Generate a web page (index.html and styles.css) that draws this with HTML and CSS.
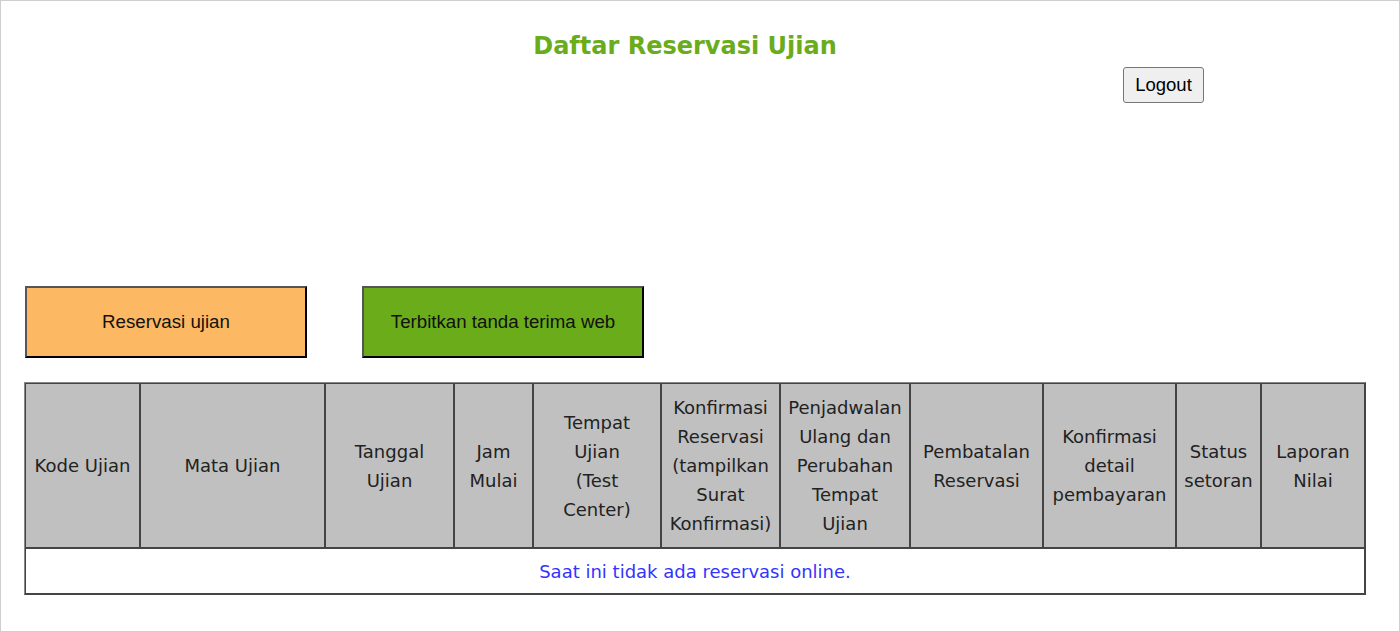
FILE: index.html
```html
<!DOCTYPE html>
<html lang="id">
<head>
<meta charset="utf-8">
<title>Daftar Reservasi Ujian</title>
<link rel="stylesheet" href="styles.css">
</head>
<body>
<div class="page">
  <h1 class="title">Daftar Reservasi Ujian</h1>
  <div class="logout-row">
    <button class="logout" type="button">Logout</button>
  </div>
  <div class="actions">
    <button class="action action-orange" type="button">Reservasi ujian</button>
    <button class="action action-green" type="button">Terbitkan tanda terima web</button>
  </div>
  <table class="list">
    <colgroup>
      <col class="c1"><col class="c2"><col class="c3"><col class="c4"><col class="c5"><col class="c6">
      <col class="c7"><col class="c8"><col class="c9"><col class="c10"><col class="c11">
    </colgroup>
    <thead>
      <tr>
        <th>Kode Ujian</th>
        <th>Mata Ujian</th>
        <th>Tanggal<br>Ujian</th>
        <th>Jam<br>Mulai</th>
        <th>Tempat<br>Ujian<br>(Test<br>Center)</th>
        <th>Konfirmasi<br>Reservasi<br>(tampilkan<br>Surat<br>Konfirmasi)</th>
        <th>Penjadwalan<br>Ulang dan<br>Perubahan<br>Tempat<br>Ujian</th>
        <th>Pembatalan<br>Reservasi</th>
        <th>Konfirmasi<br>detail<br>pembayaran</th>
        <th>Status<br>setoran</th>
        <th>Laporan<br>Nilai</th>
      </tr>
    </thead>
    <tbody>
      <tr>
        <td class="empty" colspan="11">Saat ini tidak ada reservasi online.</td>
      </tr>
    </tbody>
  </table>
</div>
</body>
</html>
```
FILE: styles.css
```css
html, body {
  margin: 0;
  padding: 0;
  background: #ffffff;
}

.page {
  box-sizing: border-box;
  width: 1400px;
  height: 632px;
  border: 1px solid #cfcfcf;
  padding: 0 0 0 24px;
  font-family: "DejaVu Sans", Verdana, sans-serif;
}

.title {
  margin: 29px 0 0 -24px;
  padding-right: 30px;
  text-align: center;
  font-family: "DejaVu Sans", Verdana, sans-serif;
  font-size: 24px;
  font-weight: bold;
  line-height: 32px;
  color: #6aac1a;
}

.logout-row {
  display: flex;
  justify-content: flex-end;
  padding-right: 195px;
  margin-top: 5px;
}

.logout {
  box-sizing: border-box;
  width: 81px;
  height: 36px;
  padding: 0;
  font-family: "Liberation Sans", Arial, sans-serif;
  font-size: 18.5px;
  color: #000;
  background: #efefef;
  border: 1px solid #767676;
  border-radius: 3px;
}

.actions {
  display: flex;
  gap: 55px;
  margin-top: 183px;
}

.action {
  box-sizing: border-box;
  width: 282px;
  height: 72px;
  padding: 0;
  font-family: "Liberation Sans", Arial, sans-serif;
  font-size: 18.7px;
  color: #111;
  border-width: 2px;
  border-style: solid;
  border-color: #555 #000 #000 #555;
}

.action-orange { background: #fcb862; }
.action-green { background: #6aac1a; }

.list {
  margin: 24px 0 0 -1px;
  width: 1341px;
  border-collapse: separate;
  border-spacing: 0;
  border-width: 1px;
  border-style: solid;
  border-color: #888 #444 #444 #888;
  table-layout: fixed;
  font-size: 18px;
  line-height: 29px;
  color: #222;
}

.list th,
.list td {
  border: 1px solid #444;
  padding: 0;
  text-align: center;
}

.list th {
  height: 163px;
  background: #c0c0c0;
  font-weight: normal;
  vertical-align: middle;
}

.c1 { width: 115px; }
.c2 { width: 185px; }
.c3 { width: 129px; }
.c4 { width: 79px; }
.c5 { width: 128px; }
.c6 { width: 119px; }
.c7 { width: 130px; }
.c8 { width: 133px; }
.c9 { width: 133px; }
.c10 { width: 85px; }
.c11 { width: 104px; }

.list td.empty {
  height: 44px;
  background: #fff;
  color: #3333ff;
  vertical-align: middle;
}
```
